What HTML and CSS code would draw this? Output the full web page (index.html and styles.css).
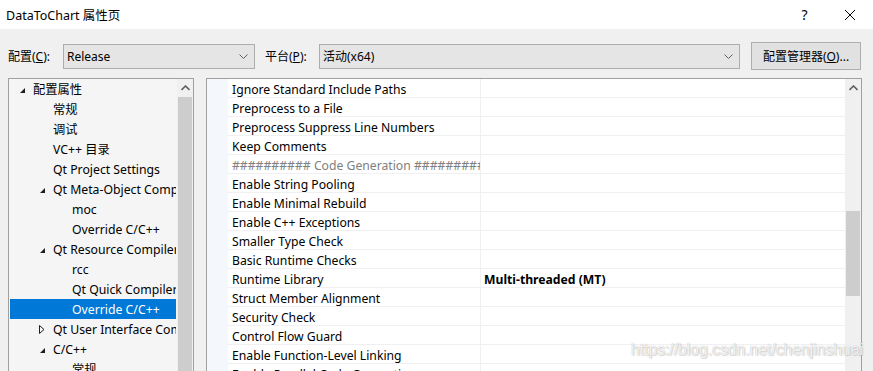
FILE: index.html
```html
<!DOCTYPE html>
<html>
<head>
<meta charset="utf-8">
<link rel="stylesheet" href="styles.css">
</head>
<body>
<div class="window">
  <div class="titlebar">
    <span class="title">DataToChart 属性页</span>
    <span class="tb-btn help">?</span>
    <span class="tb-btn close"><svg width="12" height="12" viewBox="0 0 12 12"><path d="M1 1 L11 11 M11 1 L1 11" stroke="#000" stroke-width="1"/></svg></span>
  </div>
  <div class="main">
    <div class="config-row">
      <span class="label">配置(<u>C</u>):</span>
      <div class="combo combo-config"><span>Release</span><svg class="chev" width="9" height="5" viewBox="0 0 9 5"><path d="M0.5 0.5 L4.5 4.5 L8.5 0.5" fill="none" stroke="#606060" stroke-width="1"/></svg></div>
      <span class="label label-plat">平台(<u>P</u>):</span>
      <div class="combo combo-plat"><span>活动(x64)</span><svg class="chev" width="9" height="5" viewBox="0 0 9 5"><path d="M0.5 0.5 L4.5 4.5 L8.5 0.5" fill="none" stroke="#606060" stroke-width="1"/></svg></div>
      <button class="btn">配置管理器(<u>O</u>)...</button>
    </div>
    <div class="panels">
      <div class="tree">
        <div class="tree-rows">
          <div class="trow l0"><span class="abox"><span class="arrow exp"></span></span><span class="ttext">配置属性</span></div>
          <div class="trow l1"><span class="abox"></span><span class="ttext">常规</span></div>
          <div class="trow l1"><span class="abox"></span><span class="ttext">调试</span></div>
          <div class="trow l1"><span class="abox"></span><span class="ttext">VC++ 目录</span></div>
          <div class="trow l1"><span class="abox"></span><span class="ttext">Qt Project Settings</span></div>
          <div class="trow l1"><span class="abox"><span class="arrow exp"></span></span><span class="ttext">Qt Meta-Object Compiler</span></div>
          <div class="trow l2"><span class="abox"></span><span class="ttext">moc</span></div>
          <div class="trow l2"><span class="abox"></span><span class="ttext">Override C/C++</span></div>
          <div class="trow l1"><span class="abox"><span class="arrow exp"></span></span><span class="ttext">Qt Resource Compiler</span></div>
          <div class="trow l2"><span class="abox"></span><span class="ttext">rcc</span></div>
          <div class="trow l2"><span class="abox"></span><span class="ttext">Qt Quick Compiler</span></div>
          <div class="trow l2 sel"><span class="abox"></span><span class="ttext">Override C/C++</span></div>
          <div class="trow l1"><span class="abox"><svg class="colarrow" width="6" height="9" viewBox="0 0 6 9"><path d="M0.5 0.5 L5 4.5 L0.5 8.5 Z" fill="none" stroke="#1e1e1e" stroke-width="1"/></svg></span><span class="ttext">Qt User Interface Compiler</span></div>
          <div class="trow l1"><span class="abox"><span class="arrow exp"></span></span><span class="ttext">C/C++</span></div>
          <div class="trow l2"><span class="abox"></span><span class="ttext">常规</span></div>
        </div>
        <div class="vscroll tree-scroll">
          <div class="sarrow"><svg width="9" height="6" viewBox="0 0 9 6"><path d="M0.5 5 L4.5 1 L8.5 5" fill="none" stroke="#606060" stroke-width="1.6"/></svg></div>
          <div class="thumb tree-thumb"></div>
        </div>
      </div>
      <div class="grid">
        <div class="strip"></div>
        <div class="grid-rows">
          <div class="grow"><span class="gname">Ignore Standard Include Paths</span><span class="gval"></span></div>
          <div class="grow"><span class="gname">Preprocess to a File</span><span class="gval"></span></div>
          <div class="grow"><span class="gname">Preprocess Suppress Line Numbers</span><span class="gval"></span></div>
          <div class="grow"><span class="gname">Keep Comments</span><span class="gval"></span></div>
          <div class="grow"><span class="gname gray">########## Code Generation ##########</span><span class="gval"></span></div>
          <div class="grow"><span class="gname">Enable String Pooling</span><span class="gval"></span></div>
          <div class="grow"><span class="gname">Enable Minimal Rebuild</span><span class="gval"></span></div>
          <div class="grow"><span class="gname">Enable C++ Exceptions</span><span class="gval"></span></div>
          <div class="grow"><span class="gname">Smaller Type Check</span><span class="gval"></span></div>
          <div class="grow"><span class="gname">Basic Runtime Checks</span><span class="gval"></span></div>
          <div class="grow"><span class="gname">Runtime Library</span><span class="gval bold">Multi-threaded (MT)</span></div>
          <div class="grow"><span class="gname">Struct Member Alignment</span><span class="gval"></span></div>
          <div class="grow"><span class="gname">Security Check</span><span class="gval"></span></div>
          <div class="grow"><span class="gname">Control Flow Guard</span><span class="gval"></span></div>
          <div class="grow"><span class="gname">Enable Function-Level Linking</span><span class="gval"></span></div>
          <div class="grow"><span class="gname">Enable Parallel Code Generation</span><span class="gval"></span></div>
        </div>
        <div class="vscroll grid-scroll">
          <div class="sarrow"><svg width="9" height="6" viewBox="0 0 9 6"><path d="M0.5 5 L4.5 1 L8.5 5" fill="none" stroke="#606060" stroke-width="1.6"/></svg></div>
          <div class="thumb grid-thumb"></div>
        </div>
        <div class="watermark">https://blog.csdn.net/chenjinshuai</div>
      </div>
    </div>
  </div>
</div>
</body>
</html>
```
FILE: styles.css
```css
* { box-sizing: border-box; }
html, body { margin: 0; padding: 0; }
body {
  width: 873px;
  height: 371px;
  overflow: hidden;
  font-family: "Noto Sans", "Noto Sans CJK SC", sans-serif;
  font-size: 12px;
  color: #000;
  background: #f0f0f0;
}
.window { width: 873px; height: 371px; overflow: hidden; }
.titlebar {
  height: 29px;
  background: #fff;
  display: flex;
  align-items: center;
  padding-left: 6px;
}
.title { flex: 1; font-size: 12.5px; }
.tb-btn { width: 45px; display: flex; justify-content: center; align-items: center; font-size: 14px; }
.close { width: 46px; }
.main { padding: 13px 12px 0 8px; }
.config-row { display: flex; align-items: center; height: 28px; }
.label { width: 55px; }
.label-plat { width: 54px; margin-left: 10px; }
.combo {
  height: 25px;
  background: #e5e5e5;
  border: 1px solid #adadad;
  display: flex;
  align-items: center;
  justify-content: space-between;
  padding: 0 6px 0 3px;
}
.combo-config { width: 192px; }
.combo-plat { width: 421px; }
.chev { margin-top: 1px; }
.btn {
  margin-left: 11px;
  width: 110px;
  height: 28px;
  background: #e1e1e1;
  border: 1px solid #adadad;
  font-family: inherit;
  font-size: 12px;
  color: #000;
  padding: 0;
}
.panels { display: flex; margin-top: 8px; gap: 12px; height: 320px; }
.tree {
  width: 186px;
  border: 1px solid #a0a0a0;
  background: #f5f5f5;
  display: flex;
  padding-left: 1px;
}
.tree-rows { width: 166px; overflow: hidden; font-size: 12.25px; }
.trow { height: 20px; display: flex; align-items: center; white-space: nowrap; }
.l0 { padding-left: 10px; }
.l1 { padding-left: 30px; }
.l2 { padding-left: 49px; }
.abox { width: 13px; height: 20px; flex: none; display: flex; align-items: center; }
.arrow.exp {
  width: 0; height: 0;
  border-left: 5px solid transparent;
  border-bottom: 5px solid #1e1e1e;
  margin-top: 3px;
}
.colarrow { margin-left: -1px; margin-top: 1px; }
.trow.sel { background: #0078d7; color: #fff; }
.vscroll {
  width: 16px;
  flex: none;
  background: #f0f0f0;
  display: flex;
  flex-direction: column;
  align-items: stretch;
}
.tree-scroll { margin-left: 1px; }
.sarrow { height: 18px; display: flex; justify-content: center; align-items: center; }
.tree-thumb { margin: 0 1px; background: #cdcdcd; flex: 1; }
.grid {
  width: 656px;
  border: 1px solid #a0a0a0;
  background: #fff;
  display: flex;
  position: relative;
}
.strip { width: 21px; background: #f4f7fc; flex: none; }
.grid-rows { width: 617px; overflow: hidden; }
.grow { height: 19px; display: flex; border-bottom: 1px solid #f0f0f3; }
.gname {
  width: 253px;
  height: 18px;
  padding-left: 4px;
  border-right: 1px solid #f0f0f3;
  white-space: nowrap;
  overflow: hidden;
  line-height: 22px;
  font-size: 12.2px;
}
.gval { padding-left: 3px; height: 18px; line-height: 22px; white-space: nowrap; font-size: 12.2px; }
.gray { color: #808080; }
.bold { font-weight: bold; }
.grid-scroll { width: 16px; }
.grid-thumb { margin: 114px 1px 0; height: 85px; background: #cdcdcd; }
.watermark {
  position: absolute;
  left: 424px;
  top: 262px;
  font-family: "Liberation Sans", sans-serif;
  font-size: 15.7px;
  color: rgba(255, 255, 255, 0.85);
  text-shadow: 0 0 1px rgba(140, 140, 140, 0.7), 1px 1px 1px rgba(160,160,160,0.4);
  white-space: nowrap;
}
```
